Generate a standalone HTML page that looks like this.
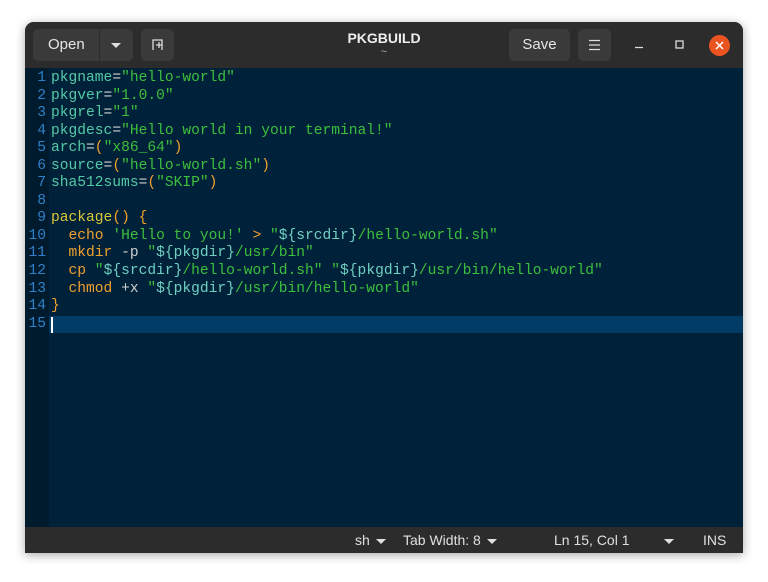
<!DOCTYPE html>
<html><head><meta charset="utf-8"><style>
*{margin:0;padding:0;box-sizing:border-box}
body{width:768px;height:582px;background:#fff;position:relative;overflow:hidden;font-family:"Liberation Sans",sans-serif}
.win{position:absolute;left:25px;top:22px;width:718px;height:531px;background:#2c2c2c;border-radius:9px 9px 0 0;box-shadow:0 2px 10px rgba(0,0,0,.35);overflow:hidden}
.hdr{position:absolute;left:0;top:0;width:718px;height:46px;background:#2c2c2c}
.btn{position:absolute;top:7px;height:32px;background:#3a3a3a;border-radius:5px;color:#e6e6e6;font-size:15px;line-height:32px;text-align:center}
.title{position:absolute;left:0;width:718px;top:8px;text-align:center;color:#eee;font-weight:bold;font-size:14px}
.sub{position:absolute;left:0;width:718px;top:24px;text-align:center;color:#aaa;font-size:11px}
.ed{position:absolute;left:0;top:46px;width:718px;height:459px;background:#00213a}
.gut{position:absolute;left:0;top:0;width:24px;height:459px;background:#001a2e}
.cur{position:absolute;left:24px;top:248px;width:694px;height:17px;background:#013c66}
.caret{position:absolute;left:26px;top:249px;width:1.5px;height:16px;background:#fff}
pre{position:absolute;top:2px;font-family:"Liberation Mono",monospace;font-size:14.6px;line-height:17.55px;white-space:pre}
.ln{left:0;width:21px;text-align:right;color:#2f80c8}
.code{left:26px;color:#d0d0d0}
.v{color:#55c9a6}.s{color:#3cbf3c}.o{color:#f0a02c}.y{color:#d9c73a}.c{color:#6fd0c0}
.st{position:absolute;left:0;top:505px;width:718px;height:26px;background:#2c2c2c;color:#e0e0e0;font-size:14px;line-height:26px}
.st>span{position:absolute}
.tri{display:inline-block;width:0;height:0;border-left:5px solid transparent;border-right:5px solid transparent;border-top:5px solid #e0e0e0;vertical-align:middle;margin-left:6px}
</style></head><body>
<div class="win">
<div class="hdr">
<div class="btn" style="left:8px;width:100px;text-align:left"><span style="padding-left:15px">Open</span><div style="position:absolute;left:66px;top:0;width:1px;height:32px;background:#2c2c2c"></div><span class="tri" style="position:absolute;left:78px;top:14px;margin:0"></span></div>
<div class="btn" style="left:116px;width:33px;font-size:12px">
<svg width="33" height="32" viewBox="0 0 33 32"><path d="M12 21V11h9v10M15 16h6M18 13v6" stroke="#ddd" stroke-width="1.3" fill="none"/></svg></div>
<div class="title">PKGBUILD</div><div class="sub">~</div>
<div class="btn" style="left:484px;width:61px">Save</div>
<div class="btn" style="left:553px;width:33px"><svg width="33" height="32"><path d="M11 11.5h11M11 16h11M11 20.5h11" stroke="#ddd" stroke-width="1.3"/></svg></div>
<svg style="position:absolute;left:605px;top:14px" width="20" height="20"><path d="M5 11.5h8" stroke="#ddd" stroke-width="1.3"/></svg>
<svg style="position:absolute;left:645px;top:14px" width="20" height="20"><rect x="6" y="5" width="7" height="7" stroke="#ddd" stroke-width="1.3" fill="none"/></svg>
<div style="position:absolute;left:684px;top:13px;width:21px;height:21px;border-radius:50%;background:#e95420"><svg width="21" height="21"><path d="M7 7l7 7M14 7l-7 7" stroke="#fff" stroke-width="1.5"/></svg></div>
</div>
<div class="ed">
<div class="gut"></div><div class="cur"></div><div class="caret"></div>
<pre class="ln">1
2
3
4
5
6
7
8
9
10
11
12
13
14
15</pre>
<pre class="code"><span class="v">pkgname</span>=<span class="s">"hello-world"</span>
<span class="v">pkgver</span>=<span class="s">"1.0.0"</span>
<span class="v">pkgrel</span>=<span class="s">"1"</span>
<span class="v">pkgdesc</span>=<span class="s">"Hello world in your terminal!"</span>
<span class="v">arch</span>=<span class="o">(</span><span class="s">"x86_64"</span><span class="o">)</span>
<span class="v">source</span>=<span class="o">(</span><span class="s">"hello-world.sh"</span><span class="o">)</span>
<span class="v">sha512sums</span>=<span class="o">(</span><span class="s">"SKIP"</span><span class="o">)</span>

<span class="y">package</span><span class="o">() {</span>
  <span class="o">echo</span> <span class="s">'Hello to you!'</span> <span class="o">&gt;</span> <span class="s">"</span><span class="c">${srcdir}</span><span class="s">/hello-world.sh"</span>
  <span class="o">mkdir</span> -p <span class="s">"</span><span class="c">${pkgdir}</span><span class="s">/usr/bin"</span>
  <span class="o">cp</span> <span class="s">"</span><span class="c">${srcdir}</span><span class="s">/hello-world.sh"</span> <span class="s">"</span><span class="c">${pkgdir}</span><span class="s">/usr/bin/hello-world"</span>
  <span class="o">chmod</span> +x <span class="s">"</span><span class="c">${pkgdir}</span><span class="s">/usr/bin/hello-world"</span>
<span class="o">}</span>
</pre>
</div>
<div class="st">
<span style="left:330px">sh<span class="tri"></span></span>
<span style="left:378px">Tab Width: 8<span class="tri"></span></span>
<span style="left:529px">Ln 15, Col 1</span>
<span style="left:639px"><span class="tri" style="margin:0"></span></span>
<span style="left:678px">INS</span>
</div>
</div>
</body></html>
